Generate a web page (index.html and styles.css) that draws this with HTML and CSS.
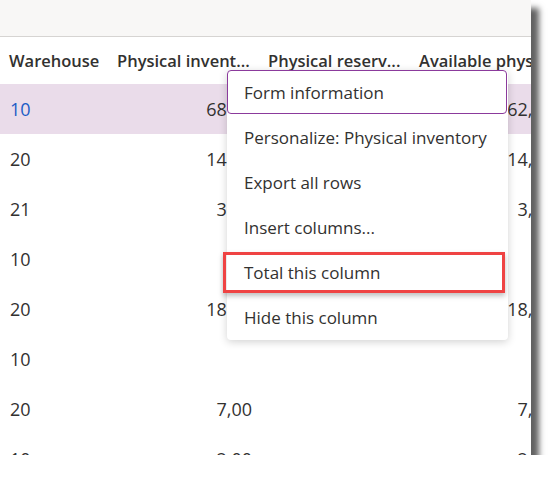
FILE: index.html
```html
<!DOCTYPE html>
<html lang="en">
<head>
<meta charset="utf-8">
<title>Inventory grid</title>
<link rel="stylesheet" href="styles.css">
</head>
<body>
<div class="frame">
  <div class="topband"></div>
  <div class="grid">
    <div class="row head">
      <div class="cell">Warehouse</div>
      <div class="cell">Physical invent...</div>
      <div class="cell">Physical reserv...</div>
      <div class="cell">Available phys</div>
    </div>
    <div class="row selected">
      <div class="cell link">10</div>
      <div class="cell num">68,00</div>
      <div class="cell num"></div>
      <div class="cell num">62,00</div>
    </div>
    <div class="row">
      <div class="cell">20</div>
      <div class="cell num">14,00</div>
      <div class="cell num"></div>
      <div class="cell num">14,00</div>
    </div>
    <div class="row">
      <div class="cell">21</div>
      <div class="cell num">3,00</div>
      <div class="cell num"></div>
      <div class="cell num">3,00</div>
    </div>
    <div class="row">
      <div class="cell">10</div>
      <div class="cell num"></div>
      <div class="cell num"></div>
      <div class="cell num"></div>
    </div>
    <div class="row">
      <div class="cell">20</div>
      <div class="cell num">18,00</div>
      <div class="cell num"></div>
      <div class="cell num">18,00</div>
    </div>
    <div class="row">
      <div class="cell">10</div>
      <div class="cell num"></div>
      <div class="cell num"></div>
      <div class="cell num"></div>
    </div>
    <div class="row">
      <div class="cell">20</div>
      <div class="cell num">7,00</div>
      <div class="cell num"></div>
      <div class="cell num">7,00</div>
    </div>
    <div class="row">
      <div class="cell">10</div>
      <div class="cell num">2,00</div>
      <div class="cell num"></div>
      <div class="cell num">2,00</div>
    </div>
  </div>

  <ul class="menu">
    <li class="item focused">Form information</li>
    <li class="item">Personalize: Physical inventory</li>
    <li class="item">Export all rows</li>
    <li class="item">Insert columns...</li>
    <li class="item">Total this column</li>
    <li class="item">Hide this column</li>
  </ul>
  <div class="callout"></div>
</div>
</body>
</html>
```

FILE: styles.css
```css
html, body {
  margin: 0;
  padding: 0;
  background: #ffffff;
}

body {
  font-family: "Open Sans", "Noto Sans", sans-serif;
  color: #323130;
}

.frame {
  position: relative;
  width: 531px;
  height: 455px;
  overflow: hidden;
  background: #ffffff;
  box-shadow: 8px 8px 6px rgba(0, 0, 0, 0.62);
}

.topband {
  height: 36px;
  background: #f8f7f6;
  border-bottom: 1px solid #d6d4d2;
}

.grid {
  display: flex;
  flex-direction: column;
}

.row {
  display: grid;
  grid-template-columns: 108px 151px 151px 150px;
  height: 50px;
  align-items: center;
  font-size: 18px;
}

.row.head {
  height: 47px;
  font-size: 16.5px;
  font-weight: 600;
}

.row.selected {
  background: #eadcea;
}

.cell {
  padding: 0 7px 0 9px;
  white-space: nowrap;
  overflow: hidden;
}

.row:not(.head) .cell:first-child {
  padding-left: 10px;
}

.cell.num {
  text-align: right;
}

.cell.link {
  color: #1c5cc6;
}

.menu {
  position: absolute;
  left: 227px;
  top: 70px;
  width: 281px;
  margin: 0;
  padding: 0;
  list-style: none;
  background: #ffffff;
  border-radius: 4px;
  box-shadow: 0 2px 8px rgba(0, 0, 0, 0.18);
}

.item {
  height: 45px;
  display: flex;
  align-items: center;
  padding-left: 17px;
  font-size: 17px;
  color: #323130;
  box-sizing: border-box;
  white-space: nowrap;
}

.item.focused {
  border: 1px solid #8b3a9c;
  border-radius: 4px;
  padding-left: 16px;
  height: 44px;
  margin-bottom: 1px;
  width: 280px;
}

.callout {
  position: absolute;
  left: 223px;
  top: 252px;
  width: 276px;
  height: 35px;
  border: 3px solid #ef4343;
  box-shadow: 0 3px 5px rgba(0, 0, 0, 0.25);
}
```
